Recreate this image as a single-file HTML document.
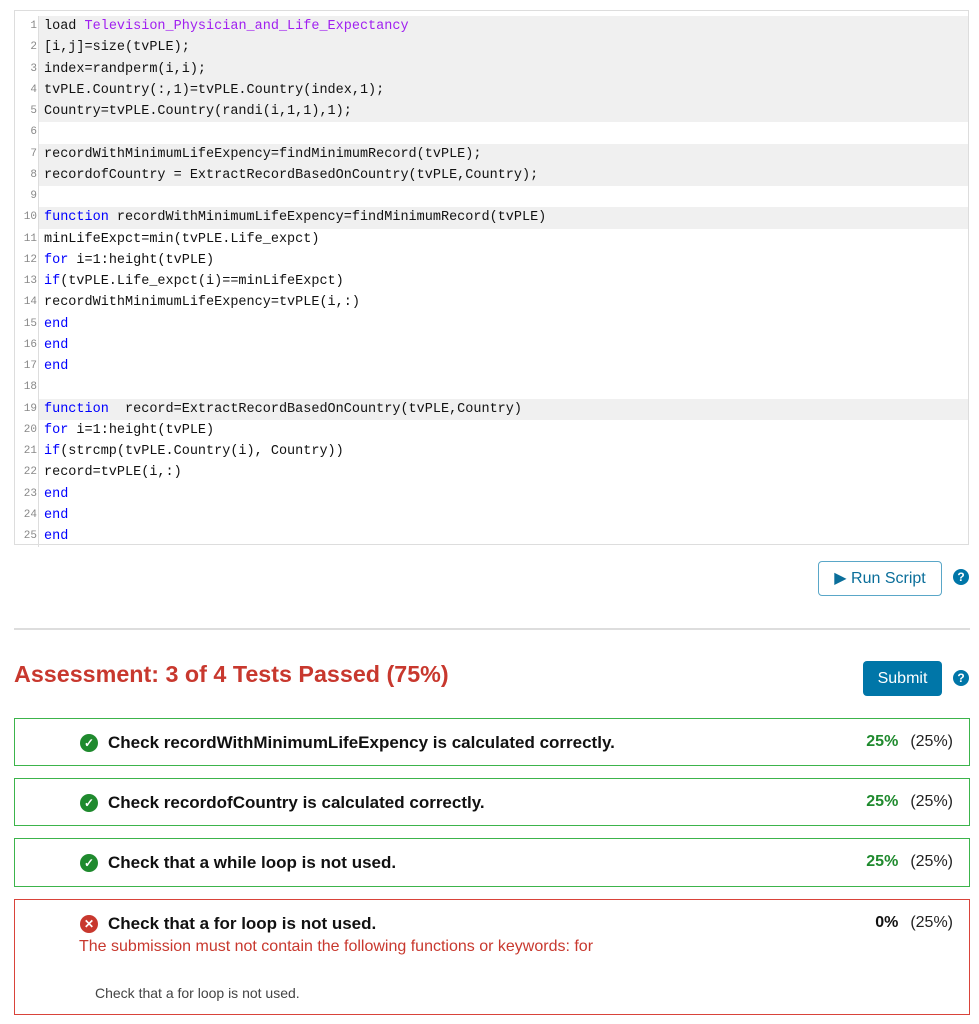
<!DOCTYPE html>
<html><head><style>
body{margin:0;background:#fff;font-family:"Liberation Sans",sans-serif;width:979px;height:1024px;overflow:hidden;position:relative}
.code{position:absolute;left:14px;top:10px;width:955px;height:535px;border:1px solid #ddd;box-sizing:border-box;padding-top:5px}
.ln{height:21.25px;line-height:21.25px;font-family:"Liberation Mono",monospace;font-size:13.5px;white-space:pre;position:relative}
.ln .n{position:absolute;left:0;width:22px;text-align:right;color:#888;font-size:11px}
.ln .t{position:absolute;left:23px;right:0;padding-left:5px;border-left:1px solid #ddd;color:#111}
.ln.g .t{background:#f0f0f0}
.k{color:#0000ff}.s{color:#a020f0}
.btn{position:absolute;border-radius:4px;font-size:16px;box-sizing:border-box;text-align:center}
.q{position:absolute;width:16px;height:16px;border-radius:50%;background:#0076a8;color:#fff;font-size:12px;font-weight:bold;text-align:center;line-height:16px}
.box{position:absolute;left:14px;width:956px;border:1px solid #3cb44b;box-sizing:border-box}
.box.f{border-color:#d9433a}
.ti{position:absolute;left:93px;top:14px;font-weight:bold;font-size:17px;color:#111}
.ic{position:absolute;left:65px;top:15px;width:18px;height:18px;border-radius:50%;background:#1f8a2e;color:#fff;font-size:12px;text-align:center;line-height:18px;font-weight:bold}
.pc{position:absolute;right:16px;top:14px;font-size:16px;color:#222}
.pc b{color:#1f8a2e;margin-right:12px}
</style></head><body>
<div class="code">
<div class="ln g"><span class="n">1</span><span class="t">load <span class="s">Television_Physician_and_Life_Expectancy</span></span></div>
<div class="ln g"><span class="n">2</span><span class="t">[i,j]=size(tvPLE);</span></div>
<div class="ln g"><span class="n">3</span><span class="t">index=randperm(i,i);</span></div>
<div class="ln g"><span class="n">4</span><span class="t">tvPLE.Country(:,1)=tvPLE.Country(index,1);</span></div>
<div class="ln g"><span class="n">5</span><span class="t">Country=tvPLE.Country(randi(i,1,1),1);</span></div>
<div class="ln"><span class="n">6</span><span class="t"> </span></div>
<div class="ln g"><span class="n">7</span><span class="t">recordWithMinimumLifeExpency=findMinimumRecord(tvPLE);</span></div>
<div class="ln g"><span class="n">8</span><span class="t">recordofCountry = ExtractRecordBasedOnCountry(tvPLE,Country);</span></div>
<div class="ln"><span class="n">9</span><span class="t"> </span></div>
<div class="ln g"><span class="n">10</span><span class="t"><span class="k">function</span> recordWithMinimumLifeExpency=findMinimumRecord(tvPLE)</span></div>
<div class="ln"><span class="n">11</span><span class="t">minLifeExpct=min(tvPLE.Life_expct)</span></div>
<div class="ln"><span class="n">12</span><span class="t"><span class="k">for</span> i=1:height(tvPLE)</span></div>
<div class="ln"><span class="n">13</span><span class="t"><span class="k">if</span>(tvPLE.Life_expct(i)==minLifeExpct)</span></div>
<div class="ln"><span class="n">14</span><span class="t">recordWithMinimumLifeExpency=tvPLE(i,:)</span></div>
<div class="ln"><span class="n">15</span><span class="t"><span class="k">end</span></span></div>
<div class="ln"><span class="n">16</span><span class="t"><span class="k">end</span></span></div>
<div class="ln"><span class="n">17</span><span class="t"><span class="k">end</span></span></div>
<div class="ln"><span class="n">18</span><span class="t"> </span></div>
<div class="ln g"><span class="n">19</span><span class="t"><span class="k">function</span>  record=ExtractRecordBasedOnCountry(tvPLE,Country)</span></div>
<div class="ln"><span class="n">20</span><span class="t"><span class="k">for</span> i=1:height(tvPLE)</span></div>
<div class="ln"><span class="n">21</span><span class="t"><span class="k">if</span>(strcmp(tvPLE.Country(i), Country))</span></div>
<div class="ln"><span class="n">22</span><span class="t">record=tvPLE(i,:)</span></div>
<div class="ln"><span class="n">23</span><span class="t"><span class="k">end</span></span></div>
<div class="ln"><span class="n">24</span><span class="t"><span class="k">end</span></span></div>
<div class="ln"><span class="n">25</span><span class="t"><span class="k">end</span></span></div>
</div>
<div class="btn" style="left:818px;top:561px;width:124px;height:35px;border:1px solid #5aa7c8;color:#0a6e9a;line-height:33px">▶ Run Script</div>
<div class="q" style="left:953px;top:569px">?</div>
<div style="position:absolute;left:14px;top:628px;width:956px;height:2px;background:#ddd"></div>
<div style="position:absolute;left:14px;top:661px;font-size:23.3px;font-weight:bold;color:#c8382e">Assessment: 3 of 4 Tests Passed (75%)</div>
<div class="btn" style="left:863px;top:661px;width:79px;height:35px;background:#0076a8;color:#fff;line-height:35px">Submit</div>
<div class="q" style="left:953px;top:670px">?</div>
<div class="box" style="top:718px;height:48px"><div class="ic">✓</div><div class="ti">Check recordWithMinimumLifeExpency is calculated correctly.</div><div class="pc"><b>25%</b>(25%)</div></div>
<div class="box" style="top:778px;height:48px"><div class="ic">✓</div><div class="ti">Check recordofCountry is calculated correctly.</div><div class="pc"><b>25%</b>(25%)</div></div>
<div class="box" style="top:838px;height:49px"><div class="ic">✓</div><div class="ti">Check that a while loop is not used.</div><div class="pc"><b>25%</b>(25%)</div></div>
<div class="box f" style="top:899px;height:116px"><div class="ic" style="background:#c8382e;top:15px">✕</div><div class="ti">Check that a for loop is not used.</div><div class="pc"><b style="color:#111">0%</b>(25%)</div>
<div style="position:absolute;left:64px;top:38px;font-size:16px;color:#c8382e">The submission must not contain the following functions or keywords: for</div>
<div style="position:absolute;left:80px;top:85px;font-size:14px;color:#444">Check that a for loop is not used.</div></div>
</body></html>
